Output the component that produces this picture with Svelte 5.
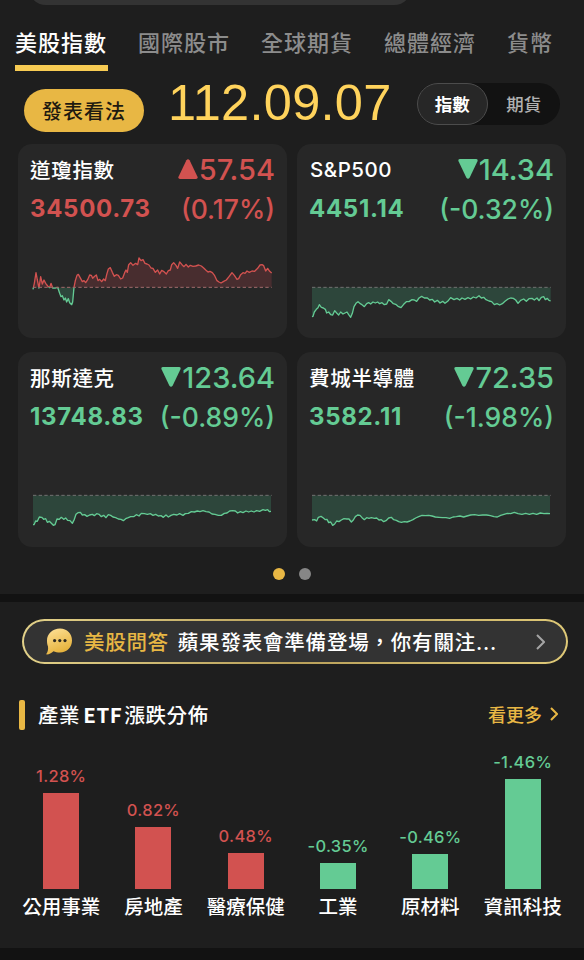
<script>
  const tabs = ["美股指數", "國際股市", "全球期貨", "總體經濟", "貨幣"];
  let activeTab = "美股指數";
  let mode = "指數";

  // Chart points are x, offset from the previous close (negative is up)
  const indices = [
    {
      name: "道瓊指數", price: "34500.73", change: "57.54", percent: "(0.17%)", up: true,
      points: "0,6 4,-12 9,-44 13,-22 18,2 23,-32 28,-10 33,-22 38,-12 44,-4 50,1 54,-12 59,2 66,2 74,0 80,18 84,28 88,25 93,38 97,32 101,44 106,34 110,46 116,52 119,44 123,0 127,-20 132,-36 136,-39 141,-30 148,-17 153,-20 158,-14 164,-23 170,-37 175,-36 179,-27 185,-33 190,-37 195,-20 200,-24 206,-17 212,-25 217,-20 221,-38 226,-55 232,-59 238,-45 244,-33 250,-38 256,-36 263,-25 269,-28 275,-44 279,-52 283,-45 287,-68 293,-74 300,-66 308,-72 314,-68 318,-88 324,-80 330,-83 336,-72 342,-70 348,-67 354,-58 360,-57 367,-45 374,-52 380,-40 386,-51 393,-47 400,-40 406,-50 412,-52 416,-68 422,-74 429,-66 434,-57 440,-76 447,-68 453,-62 459,-69 466,-61 472,-66 480,-63 488,-64 497,-67 505,-64 512,-58 519,-51 525,-46 531,-48 538,-44 545,-35 552,-20 558,-16 564,-13 572,-18 580,-22 588,-32 597,-44 604,-36 612,-24 617,-26 623,-38 630,-44 636,-42 642,-49 649,-45 657,-49 665,-48 674,-57 681,-67 687,-68 692,-65 698,-49 704,-57 710,-48 716,-43"
    },
    {
      name: "S&P500", price: "4451.14", change: "14.34", percent: "(-0.32%)", up: false,
      points: "0,88 3,87 7,74 13,66 18,61 22,52 28,60 34,62 40,66 44,77 50,74 56,82 62,83 68,70 74,77 80,83 86,74 93,80 99,77 105,74 110,82 116,90 121,78 126,58 132,48 138,43 145,49 151,53 157,58 164,49 170,46 176,50 183,44 190,47 197,44 203,49 210,46 217,52 224,50 230,37 237,42 244,49 251,51 258,57 267,61 275,51 283,43 291,43 300,37 307,38 314,42 321,32 329,27 337,32 346,32 353,38 361,36 368,44 376,39 384,47 392,42 399,48 407,42 416,31 426,37 435,33 443,38 450,32 459,36 468,31 476,35 484,29 492,32 501,25 508,32 515,30 522,37 531,41 539,43 547,52 555,49 563,53 571,49 579,42 588,35 596,32 604,33 611,38 618,48 626,39 635,35 643,42 651,34 660,33 667,38 675,32 681,40 688,30 695,28 700,37 706,33 711,39 716,41"
    },
    {
      name: "那斯達克", price: "13748.83", change: "123.64", percent: "(-0.89%)", up: false,
      points: "0,88 3,88 8,77 13,78 19,65 26,66 32,72 38,70 43,81 49,78 55,84 61,90 66,88 72,71 79,72 85,66 92,72 98,68 104,75 111,76 118,84 124,72 129,57 135,52 142,51 148,59 155,58 162,63 170,59 178,57 184,61 191,55 198,57 205,64 212,60 219,67 226,58 233,60 240,65 248,67 256,71 264,72 271,76 278,70 286,67 293,64 302,64 310,58 318,62 325,54 334,55 343,57 352,55 360,60 368,57 376,62 384,61 391,66 399,59 406,65 414,60 422,57 432,59 440,55 450,60 457,55 466,54 475,49 484,50 493,47 501,49 510,46 519,49 528,50 537,56 546,57 556,60 565,60 574,54 582,53 590,47 599,46 607,47 614,53 622,49 630,52 639,47 647,50 655,47 663,50 671,46 680,48 690,43 697,45 704,43 709,49 714,48"
    },
    {
      name: "費城半導體", price: "3582.11", change: "72.35", percent: "(-1.98%)", up: false,
      points: "0,74 8,73 14,77 19,66 27,63 34,68 40,73 45,72 50,82 56,80 62,90 68,86 74,77 81,79 88,74 96,70 104,71 111,71 118,80 124,74 130,64 137,59 144,60 150,67 157,73 164,67 171,69 178,67 187,69 194,68 201,74 208,73 215,79 222,76 230,68 238,66 245,73 253,75 260,79 268,81 277,79 285,80 294,77 303,73 311,68 320,64 330,60 340,61 350,60 360,62 370,65 381,66 391,67 402,67 413,69 423,65 433,64 444,62 455,65 465,62 476,59 488,58 500,60 512,59 524,59 535,61 546,64 556,65 566,60 576,57 586,54 596,55 607,51 618,55 630,57 641,54 652,57 663,54 674,57 685,53 696,55 705,54 714,55"
    }
  ];

  const sectors = [
    { name: "公用事業", value: 1.28, height: 96 },
    { name: "房地產", value: 0.82, height: 62 },
    { name: "醫療保健", value: 0.48, height: 36 },
    { name: "工業", value: -0.35, height: 26 },
    { name: "原材料", value: -0.46, height: 35 },
    { name: "資訊科技", value: -1.46, height: 110 }
  ];

  // Close the line down to the baseline so it can be filled
  function area(points) {
    const last = points.split(" ").pop().split(",")[0];
    return `0,0 ${points} ${last},0`;
  }
</script>

<main>
  <div class="search"></div>

  <nav>
    {#each tabs as tab}
      <button class="tab" class:active={tab === activeTab} on:click={() => (activeTab = tab)}>{tab}</button>
    {/each}
  </nav>

  <header>
    <button class="comment">發表看法</button>
    <div class="date">112.09.07</div>
    <div class="toggle">
      {#each ["指數", "期貨"] as item}
        <button class:on={item === mode} on:click={() => (mode = item)}>{item}</button>
      {/each}
    </div>
  </header>

  <section class="cards">
    {#each indices as index, i}
      <article class="card" class:up={index.up}>
        <div class="row">
          <h3 class:latin={index.name === "S&P500"}>{index.name}</h3>
          <div class="change">
            <svg class="arrow" viewBox="0 0 20 20">
              {#if index.up}
                <path d="M8.4 1.2Q10 -.8 11.6 1.2L19.6 18Q20 20 18 20H2Q0 20 .4 18Z" />
              {:else}
                <path d="M8.4 18.8Q10 20.8 11.6 18.8L19.6 2Q20 0 18 0H2Q0 0 .4 2Z" />
              {/if}
            </svg>
            <span>{index.change}</span>
          </div>
        </div>
        <div class="row">
          <div class="price">{index.price}</div>
          <div class="percent">{index.percent}</div>
        </div>
        <svg class="chart" viewBox="0 -130 720 240">
          <clipPath id="above{i}"><rect x="-4" y="-130" width="728" height="130" /></clipPath>
          <clipPath id="below{i}"><rect x="-4" y="0" width="728" height="110" /></clipPath>
          <g class="gain" clip-path="url(#above{i})">
            <polygon points={area(index.points)} />
            <polyline points={index.points} />
          </g>
          <g class="loss" clip-path="url(#below{i})">
            <polygon points={area(index.points)} />
            <polyline points={index.points} />
          </g>
          <line class="base" x1="0" y1="0" x2="716" y2="0" />
        </svg>
      </article>
    {/each}
  </section>

  <div class="dots"><span class="current"></span><span></span></div>

  <section class="question">
    <a href="#qa">
      <svg class="bubble" viewBox="0 0 27 27">
        <defs>
          <linearGradient id="gold" x1="0" y1="0" x2="0.4" y2="1">
            <stop offset="0" stop-color="#ffe39a" />
            <stop offset="1" stop-color="#e6b23c" />
          </linearGradient>
        </defs>
        <path fill="url(#gold)" d="M14 .5C21.2 .5 26 5.7 26 12.5S21 24.5 14 24.5C11.5 24.5 9.3 24 7.5 23.2C5.5 25 3 26.3 1 26.5C.3 26.5 .2 26 .6 25.5C1.7 24 2.4 21.5 2 18.5C1.2 16.7 1 14.6 1 12.5C1 5.7 6.8 .5 14 .5Z" />
        <circle cx="8.6" cy="12.6" r="1.6" /><circle cx="13.8" cy="12.6" r="1.6" /><circle cx="19" cy="12.6" r="1.6" />
      </svg>
      <strong>美股問答</strong>
      <span>蘋果發表會準備登場，你有關注...</span>
      <svg class="chevron" viewBox="0 0 9 16"><path d="M1 1L8 8L1 15" /></svg>
    </a>
  </section>

  <section class="sectors">
    <div class="title">
      <h2>產業<b>ETF</b>漲跌分佈</h2>
      <a class="more" href="#more">看更多 <svg viewBox="0 0 8 14"><path d="M1 1L7 7L1 13" /></svg></a>
    </div>
    <div class="bars">
      {#each sectors as sector}
        <div class="column" class:up={sector.value > 0}>
          <span class="value">{sector.value}%</span>
          <div class="bar" style="height: {sector.height}px"></div>
          <span class="label">{sector.name}</span>
        </div>
      {/each}
    </div>
  </section>
</main>

<style>
  :global(body) {
    background: #121212;
  }

  main {
    width: 584px;
    height: 960px;
    overflow: hidden;
    background: #121212;
    color: #fff;
    font-family: Inter, "Noto Sans CJK TC", sans-serif;
    display: flex;
    flex-direction: column;
  }

  button {
    border: 0;
    padding: 0;
    background: none;
    font-family: inherit;
    color: inherit;
    white-space: nowrap;
  }

  a {
    color: inherit;
    text-decoration: none;
  }

  h2, h3 {
    margin: 0;
    font-weight: 500;
  }

  .search {
    flex: none;
    height: 5px;
    padding: 0 172px 0 28px;
    background: #1e1e1e;
  }

  .search::before {
    content: "";
    display: block;
    height: 36px;
    margin-top: -31px;
    border-radius: 18px;
    background: #333;
  }

  nav {
    flex: none;
    display: flex;
    gap: 30px;
    height: 66px;
    padding-left: 15px;
    background: #1e1e1e;
  }

  .tab {
    flex: none;
    height: 66px;
    padding: 20px 1px 4px 0;
    font-size: 22px;
    line-height: 36px;
    letter-spacing: 1px;
    font-weight: 500;
    color: #8c8c8c;
    border-bottom: 6px solid transparent;
  }

  .tab.active {
    color: #fff;
    border-color: #f7cb53;
  }

  header {
    flex: none;
    display: flex;
    align-items: flex-start;
    height: 73px;
    padding: 0 24px;
    background: #1e1e1e;
  }

  .comment {
    width: 120px;
    height: 43px;
    margin-top: 18px;
    border-radius: 22px;
    background: #e8b744;
    color: #1e1a10;
    font-size: 20px;
    font-weight: 500;
    letter-spacing: 1px;
  }

  .date {
    width: 223px;
    margin: 3px 24.5px 0 24px;
    padding-right: 1px;
    font: 50.5px/58px "Liberation Sans", sans-serif;
    letter-spacing: 0.3px;
    color: #ffd35c;
    white-space: nowrap;
  }

  .toggle {
    display: flex;
    width: 143px;
    height: 42px;
    margin-top: 12px;
    border-radius: 21px;
    background: #121212;
  }

  .toggle button {
    box-sizing: border-box;
    width: 72px;
    height: 42px;
    padding-bottom: 2px;
    border-radius: 21px;
    font-size: 17.5px;
    font-weight: 500;
    color: #b0b0b0;
  }

  .toggle button.on {
    border: 1px solid #4c4c4c;
    background: #272727;
    color: #fff;
    font-weight: 700;
  }

  .cards {
    flex: none;
    display: grid;
    grid-template-columns: 269px 269px;
    grid-template-rows: 194px 194.5px;
    gap: 14px 10px;
    padding: 0 18px;
    background: #1e1e1e;
  }

  .card {
    --tone: #64cb94;
    box-sizing: border-box;
    padding: 6px 12px;
    border-radius: 14px;
    background: #272727;
  }

  .up {
    --tone: #d25250;
  }

  .row {
    display: flex;
    justify-content: space-between;
    align-items: center;
    height: 39px;
    color: var(--tone);
    white-space: nowrap;
  }

  .card h3 {
    padding-bottom: 2px;
    font-size: 20.5px;
    letter-spacing: 0.7px;
    color: #fff;
  }

  .card h3.latin {
    padding: 0 0 0 1px;
    letter-spacing: 0.5px;
  }

  .change {
    display: flex;
    align-items: center;
    gap: 1px;
    font-size: 29px;
    font-weight: 500;
  }

  .arrow {
    width: 20px;
    height: 20px;
    margin-bottom: 1px;
    fill: var(--tone);
  }

  .price {
    font-size: 24px;
    font-weight: 700;
    letter-spacing: 0.7px;
  }

  .percent {
    font-size: 26.5px;
    font-weight: 500;
  }

  .chart {
    display: block;
    width: 240px;
    height: 80px;
    margin: 16px 0 0 3px;
    overflow: visible;
  }

  .chart polyline {
    fill: none;
    stroke-width: 4;
    stroke-linejoin: round;
  }

  .gain polygon {
    fill: #482d2f;
  }

  .gain polyline {
    stroke: #d25250;
  }

  .loss polygon {
    fill: #2d463b;
  }

  .loss polyline {
    stroke: #64cb94;
  }

  .base {
    stroke: #727272;
    stroke-width: 3;
    stroke-dasharray: 10 7;
  }

  .up .base {
    stroke: #a36a6b;
  }

  .dots {
    flex: none;
    display: flex;
    justify-content: center;
    gap: 14px;
    height: 47.5px;
    padding-top: 21px;
    box-sizing: border-box;
    background: #1e1e1e;
  }

  .dots span {
    width: 12px;
    height: 12px;
    border-radius: 50%;
    background: #868686;
  }

  .dots .current {
    background: #e8b744;
  }

  .question {
    flex: none;
    margin-top: 8px;
    padding: 17px 16px 0 22px;
    background: #1e1e1e;
  }

  .question a {
    box-sizing: border-box;
    display: flex;
    align-items: center;
    height: 45px;
    padding: 0 21px 0 22px;
    border: 2px solid transparent;
    border-radius: 23px;
    background: linear-gradient(#333, #333) padding-box, linear-gradient(100deg, #e3d28a, #b9a05a 50%, #e0ca78) border-box;
    font-size: 20.5px;
    letter-spacing: 0.8px;
    white-space: nowrap;
  }

  .bubble {
    width: 27px;
    height: 27px;
    margin-right: 11px;
  }

  .bubble circle {
    fill: #2f2a20;
  }

  .question strong,
  .question span {
    padding-bottom: 2px;
    font-weight: 500;
  }

  .question strong {
    margin-right: 9px;
    letter-spacing: 0.7px;
    color: #e8b744;
  }

  .chevron {
    width: 9px;
    height: 16px;
    margin-left: auto;
    fill: none;
    stroke: #a5a5a5;
    stroke-width: 2;
  }

  .sectors {
    flex: none;
    height: 284px;
    background: #1e1e1e;
  }

  .title {
    display: flex;
    align-items: center;
    height: 30px;
    padding: 36px 26px 0 19px;
  }

  .title::before {
    content: "";
    width: 6px;
    height: 30px;
    margin-right: 13px;
    border-radius: 2px;
    background: #e8b744;
  }

  .title h2 {
    padding-bottom: 2px;
    font-size: 20.5px;
    letter-spacing: 0.6px;
  }

  .title b {
    margin: 0 2px 0 3px;
    font-family: "Noto Sans CJK TC", sans-serif;
    font-weight: 700;
  }

  .more {
    display: flex;
    align-items: center;
    gap: 8px;
    margin-left: auto;
    padding-bottom: 2px;
    font-size: 18px;
    font-weight: 500;
    color: #e8b744;
  }

  .more svg {
    width: 8px;
    height: 14px;
    fill: none;
    stroke: #e8b744;
    stroke-width: 2;
  }

  .bars {
    display: grid;
    grid-template-columns: repeat(6, 92.3px);
    height: 192px;
    padding-left: 15px;
  }

  .column {
    --tone: #64cb94;
    display: flex;
    flex-direction: column;
    align-items: center;
    justify-content: flex-end;
    white-space: nowrap;
  }

  .column.up {
    --tone: #d25250;
  }

  .value {
    margin-bottom: 7px;
    font-size: 16.5px;
    line-height: 20px;
    font-weight: 500;
    letter-spacing: 0.3px;
    color: var(--tone);
  }

  .bar {
    flex: none;
    width: 36px;
    background: var(--tone);
  }

  .label {
    height: 30px;
    padding-top: 3px;
    font-size: 19.5px;
    line-height: 30px;
    font-weight: 500;
  }
</style>
